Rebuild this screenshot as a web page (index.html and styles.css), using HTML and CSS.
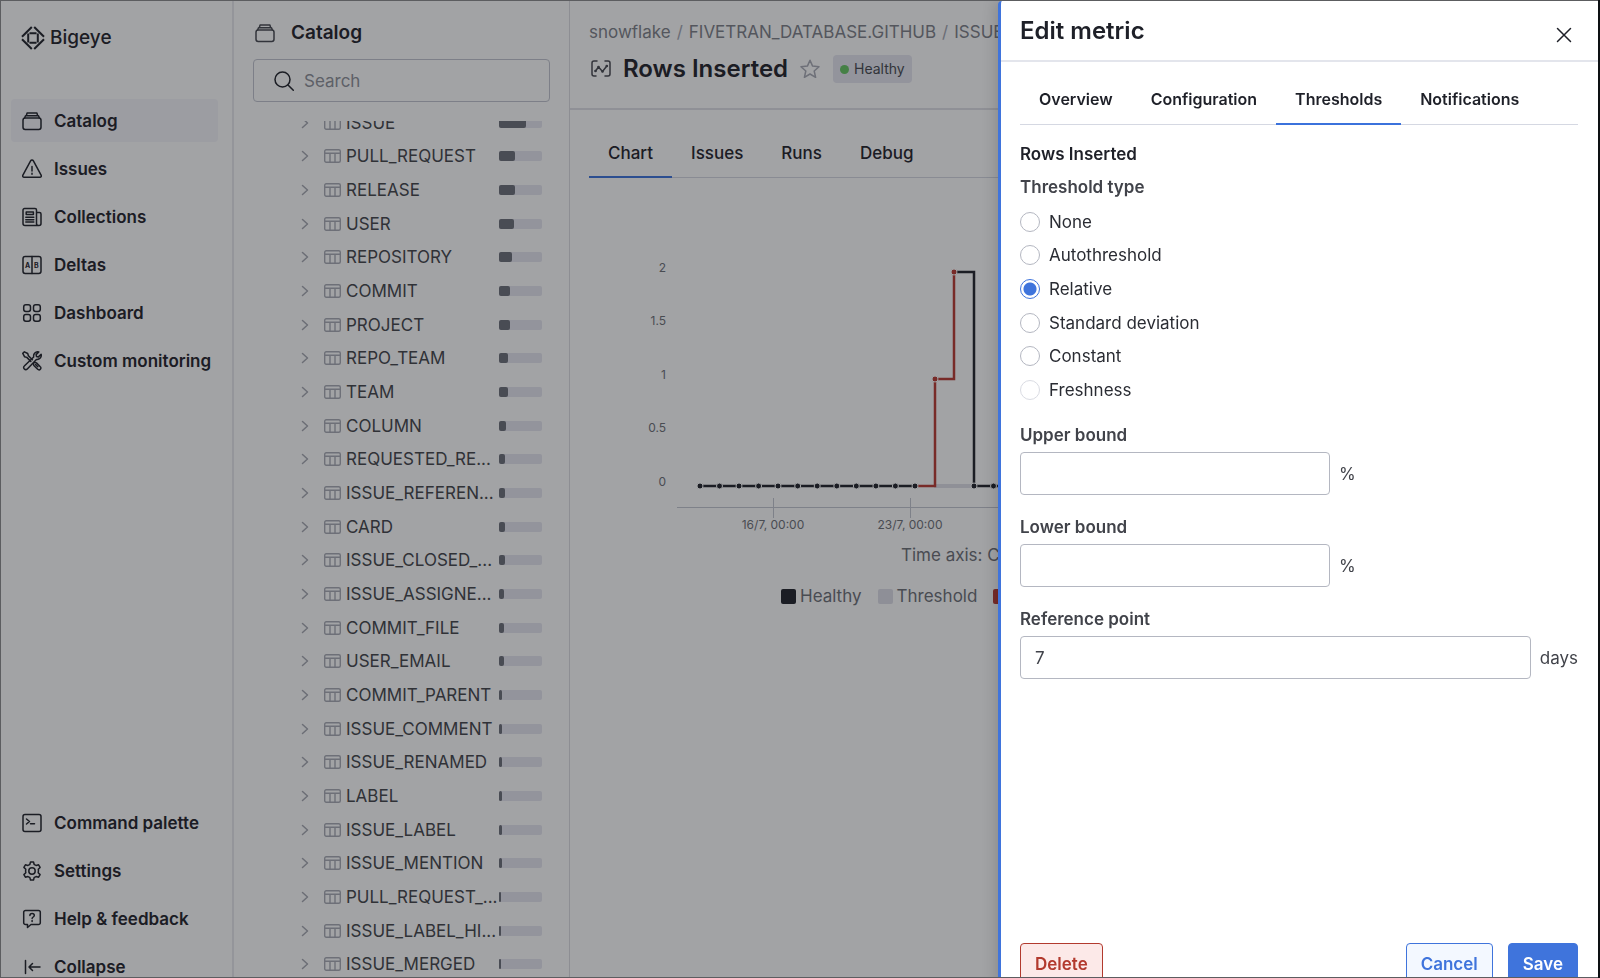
FILE: index.html
```
<!DOCTYPE html>
<html lang="en">
<head>
    <meta charset="UTF-8">
    <meta name="viewport" content="width=device-width, initial-scale=1.0">
    <title>Rows Inserted - Bigeye</title>
    <link rel="stylesheet" href="styles.css">
</head>
<body>
    <svg class="sprite" aria-hidden="true">
        <symbol id="i-catalog" viewBox="0 0 20 20">
            <rect x="1" y="7" width="18" height="11.5" rx="2.2"/>
            <path d="M2.6 7l.9-2.3h13l.9 2.3M4.4 4.5l.7-2.6h9.8l.7 2.6"/>
        </symbol>
        <symbol id="i-issues" viewBox="0 0 20 20">
            <path d="M8.6 1.9L.9 16.2c-.5 1 0 2 1.200 2h15.800c1.200 0 1.700-1 1.200-2L11.400 1.900c-.6-1.100-2.200-1.100-2.800 0z"/>
            <path d="M10 7.500v4.500M10 14.200v1"/>
        </symbol>
        <symbol id="i-collections" viewBox="0 0 20 20">
            <path d="M17 18.500H3a2 2 0 0 1-2-2V3a1.500 1.500 0 0 1 1.500-1.500h10.500A1.500 1.500 0 0 1 14.500 3v13.500a2 2 0 0 0 2 2h.5a2 2 0 0 0 2-2V7a1.500 1.500 0 0 0-1.500-1.500h-3"/>
            <path d="M4.200 5h7.200v2.500H4.200zM3.800 10.300h8M3.800 12.700h8M3.800 15.100h8"/>
        </symbol>
        <symbol id="i-dashboard" viewBox="0 0 20 20">
            <rect x="1.700" y="1.700" width="6.800" height="6.800" rx="2.200"/>
            <rect x="11.500" y="1.700" width="6.800" height="6.800" rx="2.200"/>
            <rect x="1.700" y="11.500" width="6.800" height="6.800" rx="2.200"/>
            <rect x="11.500" y="11.500" width="6.800" height="6.800" rx="2.200"/>
        </symbol>
        <symbol id="i-tools" viewBox="0 0 20 20">
            <path d="M.8 2.400L2.400.8l3.300 1.700.7 2.300 4 4M.8 2.400l1.700 3.300 2.300.7 4 4M11.600 12.500c-.4 1 0 1.700.5 2.200l3.600 3.600c.8.8 1.900.8 2.600 0 .8-.8.8-1.900 0-2.600l-3.600-3.600c-.6-.6-1.400-.8-2.200-.5M13.500 13.500l2.300 2.300"/>
            <path d="M16.800.9l-2.700 2.700.4 1.900 1.900.4 2.700-2.700c.8 2.800-1.500 5.700-4.700 5.200L5.300 17.900c-.9.9-2.200.9-3 .1-.9-.9-.9-2.200 0-3l9.400-9c-.7-3 2-5.900 5.100-5.100z"/>
        </symbol>
        <symbol id="i-command" viewBox="0 0 20 20">
            <rect x="1" y="1.500" width="18" height="17" rx="2"/>
            <path d="M4.500 6l3 2.500-3 2.500M8.500 10.800h4"/>
        </symbol>
        <symbol id="i-settings" viewBox="0 0 20 20">
            <circle cx="10" cy="10" r="3.200"/>
            <path d="M8.500 1h3l.7 2.500c.7.200 1.300.6 1.900 1l2.500-.7 1.500 2.600-1.800 1.900c.2.800.2 1.600 0 2.400l-.1 1 1.900 1.900-1.500 2.600-2.500-.7c-.6.400-1.200.8-1.900 1L11.500 19h-3l-.7-2.500c-.7-.2-1.300-.6-1.900-1l-2.500.7-1.500-2.600 1.900-1.900a7 7 0 0 1 0-3.400L1.900 6.400l1.500-2.600 2.500.7c.6-.4 1.200-.8 1.900-1z"/>
        </symbol>
        <symbol id="i-help" viewBox="0 0 20 20">
            <path d="M3.500 1.500h13A1.800 1.800 0 0 1 18.300 3.300v10.400a1.800 1.800 0 0 1-1.800 1.800H9l-3.500 3v-3h-2a1.800 1.800 0 0 1-1.800-1.800V3.300A1.800 1.800 0 0 1 3.500 1.500z"/>
            <path d="M7.900 6.600c0-1.300 1-2 2.200-2s2.200.7 2.200 1.900c0 1.500-2.200 1.500-2.200 3.100M10.100 11.500v1"/>
        </symbol>
        <symbol id="i-collapse" viewBox="0 0 20 20">
            <path d="M3.500 3.500v13M18 10H7.500M10.500 6.500L7 10l3.500 3.500"/>
        </symbol>
        <symbol id="i-table" viewBox="0 0 17 14">
            <rect x=".7" y=".7" width="15.600" height="12.600" rx="1.500"/>
            <path d="M.7 4.200h15.600M6 4.200v9M11 4.200v9"/>
        </symbol>
        <symbol id="i-chevron" viewBox="0 0 8 12">
            <path d="M1.500 1.500L6.500 6l-5 4.500"/>
        </symbol>
    </svg>

    <div class="app">
        <nav class="sidebar">
            <a class="logo" href="#">
                <svg width="24" height="24" viewBox="0 0 24 24" aria-hidden="true">
                    <path d="M10.800 1L1 10.800M13.200 1L23 10.800M1 13.200l9.800 9.800M23 13.200L13.200 23"/>
                    <path class="eye" d="M8.500 7.200h7M8.500 16.800h7M7.200 7.500v9M16.800 7.500v9"/>
                </svg>
                <span>Bigeye</span>
            </a>
            <div class="nav-group">
                <a class="nav-item active" href="#"><svg class="icon"><use href="#i-catalog"/></svg>Catalog</a>
                <a class="nav-item" href="#"><svg class="icon"><use href="#i-issues"/></svg>Issues</a>
                <a class="nav-item" href="#"><svg class="icon"><use href="#i-collections"/></svg>Collections</a>
                <a class="nav-item" href="#">
                    <svg class="icon" viewBox="0 0 20 20"><rect x="1" y="1.500" width="18" height="17" rx="2.200"/><path d="M10 1.500v17"/><text x="5.600" y="12.700">A</text><text x="14.400" y="12.700">B</text></svg>Deltas</a>
                <a class="nav-item" href="#"><svg class="icon"><use href="#i-dashboard"/></svg>Dashboard</a>
                <a class="nav-item" href="#"><svg class="icon"><use href="#i-tools"/></svg>Custom monitoring</a>
            </div>
            <div class="nav-group nav-bottom">
                <a class="nav-item" href="#"><svg class="icon"><use href="#i-command"/></svg>Command palette</a>
                <a class="nav-item" href="#"><svg class="icon"><use href="#i-settings"/></svg>Settings</a>
                <a class="nav-item" href="#"><svg class="icon"><use href="#i-help"/></svg>Help &amp; feedback</a>
                <a class="nav-item" href="#"><svg class="icon"><use href="#i-collapse"/></svg>Collapse</a>
            </div>
        </nav>

        <aside class="catalog">
            <h2 class="catalog-title"><svg class="icon"><use href="#i-catalog"/></svg>Catalog</h2>
            <label class="search">
                <svg class="icon" viewBox="0 0 20 20"><circle cx="8.500" cy="8.500" r="7.500"/><path d="M14 14l5.300 5.300"/></svg>
                <input type="search" placeholder="Search" aria-label="Search">
            </label>
            <div class="tree-scroll">
                <ul class="tree">
                    <li><svg class="chevron"><use href="#i-chevron"/></svg><svg class="table-icon"><use href="#i-table"/></svg><span class="name">ISSUE</span><span class="bar"><i style="width:63%"></i></span></li>
                    <li><svg class="chevron"><use href="#i-chevron"/></svg><svg class="table-icon"><use href="#i-table"/></svg><span class="name">PULL_REQUEST</span><span class="bar"><i style="width:38%"></i></span></li>
                    <li><svg class="chevron"><use href="#i-chevron"/></svg><svg class="table-icon"><use href="#i-table"/></svg><span class="name">RELEASE</span><span class="bar"><i style="width:37%"></i></span></li>
                    <li><svg class="chevron"><use href="#i-chevron"/></svg><svg class="table-icon"><use href="#i-table"/></svg><span class="name">USER</span><span class="bar"><i style="width:34%"></i></span></li>
                    <li><svg class="chevron"><use href="#i-chevron"/></svg><svg class="table-icon"><use href="#i-table"/></svg><span class="name">REPOSITORY</span><span class="bar"><i style="width:30%"></i></span></li>
                    <li><svg class="chevron"><use href="#i-chevron"/></svg><svg class="table-icon"><use href="#i-table"/></svg><span class="name">COMMIT</span><span class="bar"><i style="width:25%"></i></span></li>
                    <li><svg class="chevron"><use href="#i-chevron"/></svg><svg class="table-icon"><use href="#i-table"/></svg><span class="name">PROJECT</span><span class="bar"><i style="width:25%"></i></span></li>
                    <li><svg class="chevron"><use href="#i-chevron"/></svg><svg class="table-icon"><use href="#i-table"/></svg><span class="name">REPO_TEAM</span><span class="bar"><i style="width:21%"></i></span></li>
                    <li><svg class="chevron"><use href="#i-chevron"/></svg><svg class="table-icon"><use href="#i-table"/></svg><span class="name">TEAM</span><span class="bar"><i style="width:21%"></i></span></li>
                    <li><svg class="chevron"><use href="#i-chevron"/></svg><svg class="table-icon"><use href="#i-table"/></svg><span class="name">COLUMN</span><span class="bar"><i style="width:16%"></i></span></li>
                    <li><svg class="chevron"><use href="#i-chevron"/></svg><svg class="table-icon"><use href="#i-table"/></svg><span class="name">REQUESTED_RE...</span><span class="bar"><i style="width:15%"></i></span></li>
                    <li><svg class="chevron"><use href="#i-chevron"/></svg><svg class="table-icon"><use href="#i-table"/></svg><span class="name">ISSUE_REFEREN...</span><span class="bar"><i style="width:14%"></i></span></li>
                    <li><svg class="chevron"><use href="#i-chevron"/></svg><svg class="table-icon"><use href="#i-table"/></svg><span class="name">CARD</span><span class="bar"><i style="width:14%"></i></span></li>
                    <li><svg class="chevron"><use href="#i-chevron"/></svg><svg class="table-icon"><use href="#i-table"/></svg><span class="name">ISSUE_CLOSED_...</span><span class="bar"><i style="width:13%"></i></span></li>
                    <li><svg class="chevron"><use href="#i-chevron"/></svg><svg class="table-icon"><use href="#i-table"/></svg><span class="name">ISSUE_ASSIGNE...</span><span class="bar"><i style="width:11%"></i></span></li>
                    <li><svg class="chevron"><use href="#i-chevron"/></svg><svg class="table-icon"><use href="#i-table"/></svg><span class="name">COMMIT_FILE</span><span class="bar"><i style="width:11%"></i></span></li>
                    <li><svg class="chevron"><use href="#i-chevron"/></svg><svg class="table-icon"><use href="#i-table"/></svg><span class="name">USER_EMAIL</span><span class="bar"><i style="width:11%"></i></span></li>
                    <li><svg class="chevron"><use href="#i-chevron"/></svg><svg class="table-icon"><use href="#i-table"/></svg><span class="name">COMMIT_PARENT</span><span class="bar"><i style="width:8%"></i></span></li>
                    <li><svg class="chevron"><use href="#i-chevron"/></svg><svg class="table-icon"><use href="#i-table"/></svg><span class="name">ISSUE_COMMENT</span><span class="bar"><i style="width:8%"></i></span></li>
                    <li><svg class="chevron"><use href="#i-chevron"/></svg><svg class="table-icon"><use href="#i-table"/></svg><span class="name">ISSUE_RENAMED</span><span class="bar"><i style="width:7%"></i></span></li>
                    <li><svg class="chevron"><use href="#i-chevron"/></svg><svg class="table-icon"><use href="#i-table"/></svg><span class="name">LABEL</span><span class="bar"><i style="width:7%"></i></span></li>
                    <li><svg class="chevron"><use href="#i-chevron"/></svg><svg class="table-icon"><use href="#i-table"/></svg><span class="name">ISSUE_LABEL</span><span class="bar"><i style="width:6%"></i></span></li>
                    <li><svg class="chevron"><use href="#i-chevron"/></svg><svg class="table-icon"><use href="#i-table"/></svg><span class="name">ISSUE_MENTION</span><span class="bar"><i style="width:6%"></i></span></li>
                    <li><svg class="chevron"><use href="#i-chevron"/></svg><svg class="table-icon"><use href="#i-table"/></svg><span class="name">PULL_REQUEST_...</span><span class="bar"><i style="width:5%"></i></span></li>
                    <li><svg class="chevron"><use href="#i-chevron"/></svg><svg class="table-icon"><use href="#i-table"/></svg><span class="name">ISSUE_LABEL_HI...</span><span class="bar"><i style="width:5%"></i></span></li>
                    <li><svg class="chevron"><use href="#i-chevron"/></svg><svg class="table-icon"><use href="#i-table"/></svg><span class="name">ISSUE_MERGED</span><span class="bar"><i style="width:5%"></i></span></li>
                </ul>
            </div>
        </aside>

        <main class="main">
            <header class="main-header">
                <div class="breadcrumbs">
                    <a href="#">snowflake</a><span class="sep">/</span><a href="#">FIVETRAN_DATABASE.GITHUB</a><span class="sep">/</span><a href="#">ISSUE</a>
                </div>
                <div class="title-row">
                    <svg class="icon" viewBox="0 0 20 20"><path d="M6 2H3a2 2 0 0 0-2 2v11a2 2 0 0 0 2 2h2M14 2h3a2 2 0 0 1 2 2v11a2 2 0 0 1-2 2h-3M4.500 12l3-4 4 4.500L15.800 7"/><circle cx="4.500" cy="12" r=".6"/><circle cx="7.500" cy="8" r=".6"/><circle cx="11.500" cy="12.500" r=".6"/><circle cx="15.800" cy="7" r=".6"/></svg>
                    <h1>Rows Inserted</h1>
                    <button class="star" aria-label="Favorite">
                        <svg width="20" height="20" viewBox="0 0 20 20"><path d="M10 1.200l2.600 5.900 6.400.6-4.800 4.300 1.400 6.300-5.600-3.300-5.600 3.300L5.800 12 1 7.700l6.400-.6z"/></svg>
                    </button>
                    <span class="badge">Healthy</span>
                </div>
            </header>
            <div class="tabs">
                <a class="tab active" href="#">Chart</a>
                <a class="tab" href="#">Issues</a>
                <a class="tab" href="#">Runs</a>
                <a class="tab" href="#">Debug</a>
            </div>
            <svg class="chart" role="img" aria-label="Rows inserted over time">
                <g class="y-labels">
                    <text x="77" y="72">2</text>
                    <text x="77" y="125">1.5</text>
                    <text x="77" y="179">1</text>
                    <text x="77" y="232">0.5</text>
                    <text x="77" y="286">0</text>
                </g>
                <path class="axis" d="M88 307.500h900M184.500 298v20M321.500 298v20"/>
                <g class="x-labels">
                    <text x="184" y="329">16/7, 00:00</text>
                    <text x="321" y="329">23/7, 00:00</text>
                </g>
                <path class="threshold" d="M345 286h40"/>
                <path class="line" d="M111 286h215M365 72h20v214h60"/>
                <path class="line red" d="M326 286h20V179h19V72"/>
                <g class="dots">
                    <circle cx="111" cy="286" r="3"/><circle cx="130.500" cy="286" r="3"/><circle cx="150" cy="286" r="3"/>
                    <circle cx="169.600" cy="286" r="3"/><circle cx="189" cy="286" r="3"/><circle cx="208.700" cy="286" r="3"/>
                    <circle cx="228.200" cy="286" r="3"/><circle cx="247.800" cy="286" r="3"/><circle cx="267.300" cy="286" r="3"/>
                    <circle cx="286.900" cy="286" r="3"/><circle cx="306.400" cy="286" r="3"/><circle cx="326" cy="286" r="3"/>
                    <circle cx="385" cy="286" r="3"/><circle cx="404.500" cy="286" r="3"/>
                    <circle class="red" cx="346" cy="179" r="3"/><circle class="red" cx="365" cy="72" r="3"/>
                </g>
            </svg>
            <p class="axis-title">Time axis: Collection</p>
            <div class="legend">
                <span><i class="swatch"></i>Healthy</span>
                <span><i class="swatch light"></i>Threshold</span>
                <span><i class="swatch red"></i>Alert</span>
            </div>
        </main>
    </div>

    <div class="overlay"></div>

    <section class="drawer" role="dialog" aria-labelledby="drawer-title">
        <header class="drawer-header">
            <h2 id="drawer-title">Edit metric</h2>
            <button class="close" aria-label="Close">
                <svg width="16" height="16" viewBox="0 0 16 16"><path d="M1.500 1.500l13 13M14.500 1.500l-13 13"/></svg>
            </button>
        </header>
        <form class="drawer-body">
            <div class="tabs">
                <a class="tab" href="#">Overview</a>
                <a class="tab" href="#">Configuration</a>
                <a class="tab active" href="#">Thresholds</a>
                <a class="tab" href="#">Notifications</a>
            </div>
            <h3>Rows Inserted</h3>
            <fieldset>
                <legend>Threshold type</legend>
                <div class="radios">
                    <label><input type="radio" name="type">None</label>
                    <label><input type="radio" name="type">Autothreshold</label>
                    <label><input type="radio" name="type" checked>Relative</label>
                    <label><input type="radio" name="type">Standard deviation</label>
                    <label><input type="radio" name="type">Constant</label>
                    <label><input type="radio" name="type" disabled>Freshness</label>
                </div>
            </fieldset>
            <div class="field">
                <label for="upper">Upper bound</label>
                <div class="field-row"><input class="short" type="text" id="upper"><span>%</span></div>
            </div>
            <div class="field">
                <label for="lower">Lower bound</label>
                <div class="field-row"><input class="short" type="text" id="lower"><span>%</span></div>
            </div>
            <div class="field">
                <label for="reference">Reference point</label>
                <div class="field-row"><input type="text" id="reference" value="7"><span>days</span></div>
            </div>
            <footer class="drawer-footer">
                <button class="btn delete" type="button">Delete</button>
                <button class="btn cancel" type="button">Cancel</button>
                <button class="btn save" type="submit">Save</button>
            </footer>
        </form>
    </section>
    <div class="frame"></div>
</body>
</html>
```
FILE: styles.css
```
* {
    box-sizing: border-box;
}

body {
    margin: 0;
    height: 100vh;
    overflow: hidden;
    background: #0e1114;
    color: #1e2028;
    font-family: Inter, "Liberation Sans", sans-serif;
    font-size: 17px;
    line-height: 24px;
}

a {
    color: inherit;
    text-decoration: none;
}

h1, h2, h3, p, ul {
    margin: 0;
    padding: 0;
}

button, input {
    font: inherit;
    color: inherit;
}

.sprite {
    position: absolute;
    width: 0;
    height: 0;
}

svg {
    flex: none;
    fill: none;
    stroke: currentColor;
    stroke-width: 1.5;
    stroke-linecap: round;
    stroke-linejoin: round;
}

.icon {
    width: 20px;
    height: 20px;
}

.icon text {
    font-size: 7px;
    font-weight: 700;
    text-anchor: middle;
    fill: currentColor;
    stroke: none;
}

.app {
    display: flex;
    height: calc(100vh + 10px);
    margin-right: 2px;
    background: #fff;
}

/* sidebar */
.sidebar {
    display: flex;
    flex-direction: column;
    flex: none;
    width: 234px;
    padding: 24px 14px 0 11px;
    border-right: 2px solid #e8e8ed;
}

.logo {
    display: flex;
    align-items: center;
    gap: 5px;
    height: 28px;
    padding-left: 10px;
    margin-bottom: 47px;
    font-size: 19px;
    font-weight: 500;
}

.logo svg {
    stroke-width: 2;
    stroke-linecap: butt;
    stroke-linejoin: miter;
}

.nav-group {
    display: flex;
    flex-direction: column;
    gap: 5px;
}

.nav-bottom {
    margin-top: auto;
}

.nav-item {
    display: flex;
    align-items: center;
    gap: 12px;
    height: 43px;
    padding-left: 11px;
    border-radius: 4px;
    font-weight: 600;
    white-space: nowrap;
}

.nav-item.active {
    background: #f5f5fb;
}

/* catalog tree */
.catalog {
    display: flex;
    flex-direction: column;
    flex: none;
    width: 336px;
    padding: 21px 19px 7px;
    border-right: 1px solid #dcdce2;
}

.catalog-title {
    display: flex;
    align-items: center;
    gap: 16px;
    padding-left: 2px;
    font-size: 19px;
    font-weight: 600;
}

.catalog-title .icon {
    color: #45474f;
}

.search {
    display: flex;
    align-items: center;
    gap: 10px;
    height: 43px;
    margin: 14px 0 19px;
    padding: 0 20px;
    border: 1px solid #c2c4cf;
    border-radius: 4px;
}

.search input {
    flex: 1;
    min-width: 0;
    padding: 0;
    border: 0;
    outline: 0;
    background: none;
}

.search input::placeholder {
    color: #8d8f98;
}

.tree-scroll {
    display: flex;
    flex: 1;
    min-height: 0;
    overflow: hidden;
}

.tree {
    display: grid;
    flex: 1;
    grid-auto-rows: 1fr;
    margin-top: -15px;
    list-style: none;
    color: #414349;
}

.tree li {
    display: flex;
    align-items: center;
    min-height: 0;
    padding: 0 8px 0 48px;
}

.chevron {
    width: 8px;
    height: 12px;
    margin-right: 15px;
    color: #a5a7b1;
}

.table-icon {
    width: 17px;
    height: 14px;
    margin-right: 5px;
    color: #a8aab5;
    stroke-width: 1.4;
}

.name {
    flex: 1;
    min-width: 0;
    white-space: nowrap;
}

.bar {
    flex: none;
    width: 43px;
    height: 10px;
    border-radius: 2px;
    background: #e6e6f0;
}

.bar i {
    display: block;
    height: 10px;
    border-radius: 2px;
    background: #6c6e78;
}

/* metric page */
.main {
    flex: 1;
    min-width: 0;
}

.main-header {
    height: 110px;
    padding: 20px 19px 0;
    border-bottom: 2px solid #e0e0e6;
}

.breadcrumbs {
    display: flex;
    gap: 6px;
    color: #7d7f88;
    white-space: nowrap;
}

.breadcrumbs .sep {
    color: #a3a5b0;
}

.title-row {
    display: flex;
    align-items: center;
    margin-top: 8px;
    height: 34px;
}

.title-row .icon {
    margin: 0 12px 0 2px;
    color: #45474f;
}

.title-row h1 {
    font-size: 24px;
    font-weight: 600;
}

.star {
    display: flex;
    margin: 0 13px 0 12px;
    padding: 0;
    border: 0;
    background: none;
    color: #a8aab5;
}

.badge {
    display: flex;
    align-items: center;
    gap: 5px;
    height: 28px;
    padding: 0 7px;
    border-radius: 4px;
    background: #e6e6f0;
    color: #45474f;
    font-size: 14px;
}

.badge::before {
    content: "";
    width: 9px;
    height: 9px;
    border-radius: 50%;
    background: #64c562;
}

.tabs {
    display: flex;
    border-bottom: 1px solid #d5d8e2;
}

.main .tabs {
    margin: 18px 19px 0;
}

.tab {
    padding: 13px 19px 11px;
    margin-bottom: -1px;
    border-bottom: 2px solid transparent;
    font-weight: 500;
}

.tab.active {
    border-color: #3b72dc;
}

.chart {
    display: block;
    width: calc(100% - 19px);
    height: 341px;
    margin: 22px 0 0 19px;
    stroke-linejoin: miter;
    stroke-linecap: butt;
}

.chart text {
    fill: #6c6e76;
    stroke: none;
    font-size: 12px;
    text-anchor: end;
}

.chart .x-labels text {
    text-anchor: middle;
}

.chart .axis {
    stroke: #c4c6d0;
    stroke-width: 1;
}

.chart .line {
    stroke: #1e2028;
    stroke-width: 2.5;
}

.chart .threshold {
    stroke: #dfdfe8;
    stroke-width: 4;
}

.chart .line.red {
    stroke: #b93830;
}

.dots circle {
    fill: #1e2028;
    stroke: #fff;
    stroke-width: 1;
}

.dots .red {
    fill: #b93830;
}

.axis-title {
    padding: 2px 0 0 331px;
    color: #6c6e76;
}

.legend {
    display: flex;
    gap: 16px;
    padding: 17px 0 0 211px;
    color: #6c6e76;
}

.legend span {
    display: flex;
    align-items: center;
    gap: 4px;
}

.swatch {
    width: 15px;
    height: 15px;
    border-radius: 2px;
    background: #1e2028;
}

.swatch.light {
    background: #dedee8;
}

.swatch.red {
    background: #b93830;
}

.overlay {
    position: fixed;
    inset: 0 2px 0 0;
    background: rgba(22, 25, 30, 0.4);
}

/* edit drawer */
.drawer {
    position: fixed;
    top: 1px;
    right: 2px;
    bottom: -10px;
    display: flex;
    flex-direction: column;
    width: 600px;
    max-width: 100%;
    border-left: 3px solid #3f74dc;
    border-radius: 4px 0 0 0;
    background: #fff;
    box-shadow: -3px 0 14px rgba(0, 0, 0, 0.15);
}

.drawer-header {
    display: flex;
    justify-content: space-between;
    height: 61px;
    padding: 18px 26px 0 19px;
    border-bottom: 2px solid #e3e5ec;
}

.drawer-header h2 {
    font-size: 24px;
    font-weight: 600;
}

.close {
    display: flex;
    align-items: center;
    height: 32px;
    padding: 0;
    border: 0;
    background: none;
}

.drawer-body {
    display: flex;
    flex: 1;
    flex-direction: column;
    padding: 13px 20px 2px 19px;
}

.drawer .tab {
    padding: 12px 19px;
    font-size: 16px;
    font-weight: 600;
}

.drawer h3 {
    margin-top: 17px;
    font-size: 17px;
    font-weight: 600;
}

fieldset {
    margin: 9px 0 0;
    padding: 0;
    border: 0;
}

legend, .field > label {
    padding: 0;
    color: #41434a;
    font-weight: 600;
}

.radios {
    display: grid;
    grid-auto-rows: 1fr;
    height: 202px;
    margin: 6px 0 16px;
    color: #2a2c33;
}

.radios label {
    display: flex;
    align-items: center;
    gap: 9px;
}

.radios input {
    appearance: none;
    width: 20px;
    height: 20px;
    margin: 0;
    border: 1px solid #b4b7c1;
    border-radius: 50%;
    background: #fff;
}

.radios input:checked {
    border-color: #3f74dc;
    background: radial-gradient(#3f74dc 6px, #fff 7px);
}

.radios input:disabled {
    border-color: #dadce3;
}

.field {
    margin-bottom: 20px;
}

.field > label {
    display: block;
    margin-bottom: 5px;
}

.field-row {
    display: flex;
    align-items: center;
    gap: 9px;
    color: #41434a;
}

.field-row input {
    flex: 1;
    min-width: 0;
    height: 43px;
    padding: 0 14px;
    border: 1px solid #b4b7c1;
    border-radius: 4px;
    background: #fff;
}

.field-row .short {
    flex: 0 1 310px;
}

.drawer-footer {
    display: flex;
    gap: 15px;
    margin-top: auto;
}

.btn {
    height: 43px;
    padding: 0 14px 1px;
    border: 1px solid #3f74dc;
    border-radius: 4px;
    font-weight: 600;
}

.delete {
    margin-right: auto;
    border-color: #b23a2e;
    background: #fce9e8;
    color: #b23a2e;
}

.cancel {
    background: #f3f8ff;
    color: #3f74dc;
}

.save {
    background: #3f74dc;
    color: #fff;
}

/* thin window edge around the page */
.frame {
    position: fixed;
    inset: 0 2px 0 0;
    border: 1px solid #5c5d60;
    border-right: 0;
    pointer-events: none;
}
```
